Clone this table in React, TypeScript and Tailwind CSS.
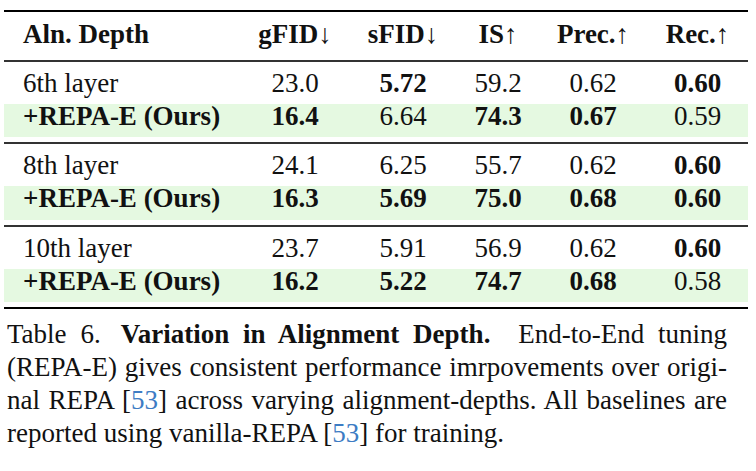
type Cell = { v: string; b?: boolean };

const sections: { base: Cell[]; ours: Cell[] }[] = [
  {
    base: [{ v: "6th layer" }, { v: "23.0" }, { v: "5.72", b: true }, { v: "59.2" }, { v: "0.62" }, { v: "0.60", b: true }],
    ours: [{ v: "+REPA-E (Ours)", b: true }, { v: "16.4", b: true }, { v: "6.64" }, { v: "74.3", b: true }, { v: "0.67", b: true }, { v: "0.59" }],
  },
  {
    base: [{ v: "8th layer" }, { v: "24.1" }, { v: "6.25" }, { v: "55.7" }, { v: "0.62" }, { v: "0.60", b: true }],
    ours: [{ v: "+REPA-E (Ours)", b: true }, { v: "16.3", b: true }, { v: "5.69", b: true }, { v: "75.0", b: true }, { v: "0.68", b: true }, { v: "0.60", b: true }],
  },
  {
    base: [{ v: "10th layer" }, { v: "23.7" }, { v: "5.91" }, { v: "56.9" }, { v: "0.62" }, { v: "0.60", b: true }],
    ours: [{ v: "+REPA-E (Ours)", b: true }, { v: "16.2", b: true }, { v: "5.22", b: true }, { v: "74.7", b: true }, { v: "0.68", b: true }, { v: "0.58" }],
  },
];

const header = [
  { v: "gFID", arrow: "↓" },
  { v: "sFID", arrow: "↓" },
  { v: "IS", arrow: "↑" },
  { v: "Prec.", arrow: "↑" },
  { v: "Rec.", arrow: "↑" },
];

const grid = "grid grid-cols-[237px_108px_108px_82px_108px_101px] h-[33.2px] leading-[25px]";

function Row({ cells, green }: { cells: Cell[]; green?: boolean }) {
  return (
    <div className={`${grid} ${green ? "bg-[#e5f9e1]" : ""}`}>
      {cells.map((c, i) => (
        <div key={i} className={`${i === 0 ? "pl-[19px] text-left" : "text-center"} ${c.b ? "font-bold" : ""}`}>
          {c.v}
        </div>
      ))}
    </div>
  );
}

export default function App() {
  return (
    <div className="w-[756px] h-[471px] bg-white text-[#111] [font-family:'Liberation_Serif',serif] text-[27px] pt-[10px] px-[4px] overflow-hidden">
      {/* table */}
      <div className="w-[744px]">
        <div className="h-[2px] bg-black" />
        <div className={`${grid} mt-[10.4px] font-bold`}>
          <div className="pl-[19px]">Aln. Depth</div>
          {header.map((h) => (
            <div key={h.v} className="text-center">
              {h.v}
              <span className="font-normal">{h.arrow}</span>
            </div>
          ))}
        </div>
        <div className="h-[2px] bg-[#333] mt-[4px]" />

        {sections.map((s, i) => (
          <div key={i}>
            <div className="mt-[9px]">
              <Row cells={s.base} />
              <Row cells={s.ours} green />
            </div>
            <div className={`h-[2px] mt-[5.2px] ${i === sections.length - 1 ? "bg-black" : "bg-[#333]"}`} />
          </div>
        ))}
      </div>

      {/* caption */}
      <div className="ml-[3px] w-[720px] mt-[8.4px] leading-[33.1px]">
        <div className="text-justify [text-align-last:justify]">
          <span className="mr-[20px]">Table 6.</span>
          <b className="mr-[14px]">Variation in Alignment Depth.</b> End-to-End tuning
        </div>
        <div className="text-justify [text-align-last:justify]">
          (REPA-E) gives consistent performance imrpovements over origi-
        </div>
        <div className="text-justify [text-align-last:justify]">
          nal REPA [<span className="text-[#3d7cc4]">53</span>] across varying alignment-depths. All baselines are
        </div>
        <div>
          reported using vanilla-REPA [<span className="text-[#3d7cc4]">53</span>] for training.
        </div>
      </div>
    </div>
  );
}
